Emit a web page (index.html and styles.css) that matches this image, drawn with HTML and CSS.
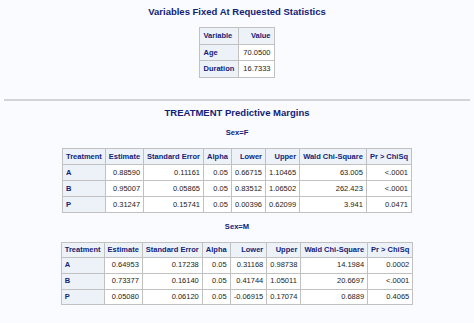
FILE: index.html
```html
<!DOCTYPE html>
<html>
<head>
<meta charset="utf-8">
<link rel="stylesheet" href="styles.css">
</head>
<body>
<div class="page">
  <div class="title">Variables Fixed At Requested Statistics</div>
  <table class="grid small">
    <thead>
      <tr><th class="l">Variable</th><th class="r">Value</th></tr>
    </thead>
    <tbody>
      <tr><th class="l">Age</th><td>70.0500</td></tr>
      <tr><th class="l">Duration</th><td>16.7333</td></tr>
    </tbody>
  </table>

  <div class="rule"></div>

  <div class="title t2">TREATMENT Predictive Margins</div>
  <div class="by">Sex=F</div>
  <table class="grid first">
    <thead>
      <tr><th class="l">Treatment</th><th class="r">Estimate</th><th class="r">Standard Error</th><th class="r">Alpha</th><th class="r">Lower</th><th class="r">Upper</th><th class="r">Wald Chi-Square</th><th class="r">Pr &gt; ChiSq</th></tr>
    </thead>
    <tbody>
      <tr><th class="l">A</th><td>0.88590</td><td>0.11161</td><td>0.05</td><td>0.66715</td><td class="lft">1.10465</td><td>63.005</td><td>&lt;.0001</td></tr>
      <tr><th class="l">B</th><td>0.95007</td><td>0.05865</td><td>0.05</td><td>0.83512</td><td class="lft">1.06502</td><td>262.423</td><td>&lt;.0001</td></tr>
      <tr><th class="l">P</th><td>0.31247</td><td>0.15741</td><td>0.05</td><td>0.00396</td><td class="lft">0.62099</td><td>3.941</td><td>0.0471</td></tr>
    </tbody>
  </table>

  <div class="by">Sex=M</div>
  <table class="grid second">
    <thead>
      <tr><th class="l">Treatment</th><th class="r">Estimate</th><th class="r">Standard Error</th><th class="r">Alpha</th><th class="r">Lower</th><th class="r">Upper</th><th class="r">Wald Chi-Square</th><th class="r">Pr &gt; ChiSq</th></tr>
    </thead>
    <tbody>
      <tr><th class="l">A</th><td>0.64953</td><td>0.17238</td><td>0.05</td><td>0.31168</td><td class="lft">0.98738</td><td>14.1984</td><td>0.0002</td></tr>
      <tr><th class="l">B</th><td>0.73377</td><td>0.16140</td><td>0.05</td><td>0.41744</td><td class="lft">1.05011</td><td>20.6697</td><td>&lt;.0001</td></tr>
      <tr><th class="l">P</th><td>0.05080</td><td>0.06120</td><td>0.05</td><td>-0.06915</td><td class="lft">0.17074</td><td>0.6889</td><td>0.4065</td></tr>
    </tbody>
  </table>
</div>
</body>
</html>
```

FILE: styles.css
```css
html, body {
  margin: 0;
  padding: 0;
  background: #fafbfe;
}
.page {
  display: flex;
  flex-direction: column;
  align-items: center;
  padding-top: 6px;
  font-family: "Liberation Sans", Arial, sans-serif;
  height: 323px;
  box-sizing: border-box;
}
.title {
  font-size: 9.5px;
  line-height: 12px;
  font-weight: bold;
  color: #112277;
  margin-bottom: 9px;
}
.title.t2 {
  margin-top: 5.5px;
  margin-bottom: 9px;
}
.by {
  font-size: 7.6px;
  line-height: 10px;
  font-weight: bold;
  color: #112277;
  margin-bottom: 10px;
}
.grid {
  border-collapse: collapse;
  border: 1px solid #c1c1c1;
  font-size: 7.5px;
}
.grid.first {
  margin-bottom: 9px;
}
.grid th, .grid td {
  border: 1px solid #c1c1c1;
  padding: 0 3px;
  line-height: 15px;
  white-space: nowrap;
}
.grid.second th, .grid.second td {
  line-height: 14.7px;
}
.grid th {
  background: #edf2f9;
  color: #112277;
  font-weight: bold;
}
.grid td {
  background: #ffffff;
  color: #222222;
  text-align: right;
}
.grid th.l { text-align: left; }
.grid th.r { text-align: right; }
.grid td.lft { text-align: left; }
.small th, .small td {
  line-height: 15.7px;
  padding: 0 4px;
}
.small {
  margin-bottom: 21px;
}
.rule {
  align-self: stretch;
  margin: 0 4px;
  height: 2px;
  background: #d4d4d6;
}
```
